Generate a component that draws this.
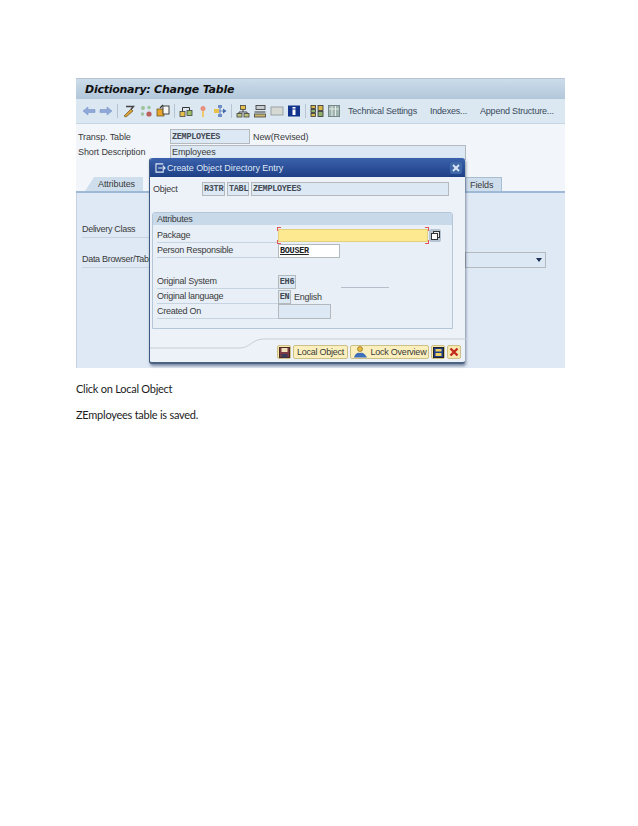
<div class="page">
  <div class="sap">
    <div class="titlebar"><h1>Dictionary: Change Table</h1></div>

    <div class="toolbar">
      <div class="icons">
        <svg width="14" height="14" viewBox="0 0 14 14"><path d="M1 7l5-4v2.500h7v3H6V11z" fill="#8fa8d8" stroke="#6f8cc4" stroke-width=".5"/></svg>
        <svg width="14" height="14" viewBox="0 0 14 14"><path d="M13 7L8 3v2.500H1v3h7V11z" fill="#8fa8d8" stroke="#6f8cc4" stroke-width=".5"/></svg>
        <span class="sep"></span>
        <svg width="14" height="14" viewBox="0 0 14 14"><path d="M2 12l7-7 2 2-7 6z" fill="#d9a23a" stroke="#6d5520" stroke-width=".7"/><path d="M4 2.500h7.500L9 5.500" fill="none" stroke="#444" stroke-width="1.400"/></svg>
        <svg width="14" height="14" viewBox="0 0 14 14"><circle cx="4" cy="4" r="2" fill="#9cc39a"/><circle cx="10" cy="3.500" r="1.700" fill="#9cc39a"/><circle cx="3.500" cy="10" r="1.700" fill="#9cc39a"/><circle cx="10" cy="10" r="2.600" fill="#b8605c"/></svg>
        <svg width="14" height="14" viewBox="0 0 14 14"><rect x="1" y="5" width="7" height="7" fill="#e8a52c" stroke="#5a4a20" stroke-width=".7"/><rect x="7" y="2" width="6" height="8" fill="#f6f6f2" stroke="#333" stroke-width=".9"/><path d="M4 4l3-3" stroke="#333" stroke-width="1.200"/></svg>
        <span class="sep"></span>
        <svg width="14" height="14" viewBox="0 0 14 14"><path d="M3.500 8V3.500h7V7" fill="none" stroke="#333"/><rect x="1" y="7.500" width="5" height="5" fill="#e6c04a" stroke="#444" stroke-width=".8"/><rect x="8" y="6.500" width="5" height="5" fill="#9dbf6a" stroke="#444" stroke-width=".8"/></svg>
        <svg width="14" height="14" viewBox="0 0 14 14"><circle cx="7" cy="4.500" r="2.500" fill="#e88f80"/><rect x="6" y="7" width="2" height="6" fill="#eec96c"/></svg>
        <svg width="14" height="14" viewBox="0 0 14 14"><path d="M1 7h10M7 2v10" stroke="#6f8cc4" stroke-width="1.200"/><rect x="5" y="1" width="4" height="3" fill="#6f8cc4"/><rect x="5" y="10" width="4" height="3" fill="#6f8cc4"/><rect x="1" y="5" width="5" height="4" fill="#e8c04c"/><path d="M10 4.500L13.500 7 10 9.500z" fill="#4468a8"/></svg>
        <span class="sep"></span>
        <svg width="14" height="14" viewBox="0 0 14 14"><path d="M7 5v3M3 10V8h8v2" fill="none" stroke="#444"/><rect x="4.500" y="1.500" width="5" height="4" fill="#e6c04a" stroke="#444" stroke-width=".8"/><rect x="1" y="9.500" width="5" height="3.500" fill="#b9c07a" stroke="#444" stroke-width=".8"/><rect x="8" y="9.500" width="5" height="3.500" fill="#b9c07a" stroke="#444" stroke-width=".8"/></svg>
        <svg width="14" height="14" viewBox="0 0 14 14"><rect x="3" y="1.500" width="9" height="4" fill="#c6cdd2" stroke="#444" stroke-width=".9"/><rect x="1.500" y="7" width="11" height="2" fill="#8a9298"/><rect x="1.500" y="10" width="11" height="3" fill="#c9b66c" stroke="#444" stroke-width=".8"/></svg>
        <svg width="14" height="14" viewBox="0 0 14 14"><rect x="1" y="3" width="12" height="8" fill="#d6d8d4" stroke="#9aa2a6"/></svg>
        <svg width="14" height="14" viewBox="0 0 14 14"><rect x="1" y="1.500" width="12" height="11" fill="#12338c"/><rect x="5.500" y="3" width="3" height="1.600" fill="#fff"/><rect x="5.500" y="5.500" width="3" height="5.500" fill="#fff"/></svg>
        <span class="sep"></span>
        <svg width="14" height="14" viewBox="0 0 14 14"><rect x="1" y="1.500" width="4.500" height="3" fill="#d8b84a" stroke="#333" stroke-width=".8"/><rect x="1" y="5.500" width="4.500" height="3" fill="#8fb06a" stroke="#333" stroke-width=".8"/><rect x="1" y="9.500" width="4.500" height="3" fill="#d8b84a" stroke="#333" stroke-width=".8"/><rect x="8" y="1.500" width="5" height="5" fill="#d8b84a" stroke="#333" stroke-width=".8"/><rect x="8" y="7.500" width="5" height="5" fill="#8fb06a" stroke="#333" stroke-width=".8"/></svg>
        <svg width="14" height="14" viewBox="0 0 14 14"><rect x="1.500" y="1.500" width="11" height="11" fill="#9fb4ae" stroke="#76878a"/><path d="M5 2v10M8.500 2v10M2 5h10" stroke="#e4ebe8"/></svg>
      </div>
      <span class="tool first">Technical Settings</span>
      <span class="tool">Indexes...</span>
      <span class="tool">Append Structure...</span>
    </div>

    <div class="head">
      <div class="row">
        <span class="lbl">Transp. Table</span>
        <span class="field mono tname">ZEMPLOYEES</span>
        <span class="status">New(Revised)</span>
      </div>
      <div class="row">
        <span class="lbl">Short Description</span>
        <span class="field sdesc">Employees</span>
      </div>
    </div>

    <div class="tabs">
      <span class="tab active">Attributes</span>
      <span class="tab fields">Fields</span>
    </div>

    <div class="panel">
      <div class="prow one"><span>Delivery Class</span></div>
      <div class="prow two">
        <span>Data Browser/Table View Maint.</span>
        <span class="select"><i></i></span>
      </div>
    </div>
  </div>

  <p class="first-line">Click on Local Object</p>
  <p>ZEmployees table is saved.</p>

  <div class="dialog">
    <div class="dlg-title">
      <svg width="11" height="10" viewBox="0 0 12 11"><path d="M9 1H1v9h8V8M3.500 5.500H11M8.500 3L11 5.500 8.500 8" fill="none" stroke="#dfe8f6" stroke-width="1.200"/></svg>
      <span>Create Object Directory Entry</span>
      <span class="close">
        <svg width="8" height="8" viewBox="0 0 8 8"><path d="M1 1l6 6M7 1L1 7" stroke="#dfe8f6" stroke-width="1.800"/></svg>
      </span>
    </div>

    <div class="dlg-body">
      <div class="obj">
        <span class="obj-lbl">Object</span>
        <span class="field mono r3">R3TR</span>
        <span class="field mono tabl">TABL</span>
        <span class="field mono oname">ZEMPLOYEES</span>
      </div>

      <div class="group">
        <div class="group-head">Attributes</div>
        <div class="grow pkg">
          <span class="glbl">Package</span>
          <span class="req"></span>
          <span class="f4">
            <svg width="9" height="9" viewBox="0 0 9 9"><rect x="2.500" y=".5" width="6" height="6" fill="#eee" stroke="#333"/><rect x=".5" y="2.500" width="6" height="6" fill="#fff" stroke="#333"/></svg>
          </span>
        </div>
        <div class="grow">
          <span class="glbl">Person Responsible</span>
          <span class="white mono">BOUSER</span>
        </div>
        <div class="grow sys">
          <span class="glbl">Original System</span>
          <span class="small mono">EH6</span>
          <span class="dash"></span>
        </div>
        <div class="grow">
          <span class="glbl">Original language</span>
          <span class="small mono en">EN</span>
          <span class="eng">English</span>
        </div>
        <div class="grow">
          <span class="glbl">Created On</span>
          <span class="empty"></span>
        </div>
      </div>
    </div>

    <div class="dlg-foot">
      <svg class="curve" width="316" height="12" viewBox="0 0 316 12"><path d="M0 10H90C100 10 102 1 114 1H316" fill="none" stroke="#c4ced9"/></svg>
      <span class="ibtn">
        <svg width="11" height="11" viewBox="0 0 11 11"><rect x=".5" y=".5" width="10" height="10" fill="#7b3a44" stroke="#4a2a20"/><rect x="2.500" y="1" width="6" height="4" fill="#efe0b8"/><rect x="2.500" y="7" width="6" height="3.500" fill="#3a3a5a"/></svg>
      </span>
      <span class="btn">Local Object</span>
      <span class="btn lock">
        <svg width="15" height="12" viewBox="0 0 15 12"><circle cx="7" cy="3" r="2.500" fill="#e8b93a" stroke="#7a6220" stroke-width=".6"/><path d="M1 11.500C2 7 5 6 7 7c2-1 5 0 7 4.500z" fill="#3f6fb8"/></svg>
        Lock Overview
      </span>
      <span class="ibtn">
        <svg width="11" height="11" viewBox="0 0 11 11"><rect x=".5" y=".5" width="10" height="10" fill="#1f3f8c" stroke="#222"/><rect x="2.500" y="2" width="6" height="2.500" fill="#f0d060"/><rect x="2.500" y="6" width="6" height="3" fill="#f0d060"/></svg>
      </span>
      <span class="ibtn">
        <svg width="10" height="10" viewBox="0 0 10 10"><path d="M1.500 1.500l7 7M8.500 1.500l-7 7" stroke="#c42a1c" stroke-width="2.400"/></svg>
      </span>
    </div>
  </div>
</div>

<style>
  :global(body) {
    background: #fff;
    margin: 0;
  }

  .page {
    position: relative;
    width: 638px;
    height: 826px;
    box-sizing: border-box;
    padding: 78px 73px 0 76px;
    overflow: hidden;
    font-family: Lato, "Open Sans", sans-serif;
    font-size: 11px;
    letter-spacing: -0.25px;
    color: #1c1c1c;
  }

  .page p {
    margin: 0 0 12px;
    line-height: 14px;
  }

  .first-line {
    padding-top: 14px;
  }

  .sap {
    height: 290px;
    display: flex;
    flex-direction: column;
    background: #f2f6fa;
    font-family: "Liberation Sans", Arial, sans-serif;
    font-size: 9px;
    color: #3a3a3a;
    letter-spacing: -0.1px;
    white-space: nowrap;
  }

  .titlebar {
    height: 21px;
    display: flex;
    align-items: center;
    padding-left: 9px;
    background: linear-gradient(#ccdcea, #b2c7da);
    border-top: 1px solid #b7c4d6;
    box-sizing: border-box;
  }

  h1 {
    margin: 0;
    font-family: "DejaVu Sans", sans-serif;
    font-size: 11px;
    font-style: italic;
    font-weight: 700;
    letter-spacing: -0.25px;
    color: #111;
  }

  .toolbar {
    height: 25px;
    display: flex;
    align-items: center;
    padding-left: 6px;
    background: #dbe7f1;
    border-bottom: 1px solid #c7d6e4;
    box-sizing: border-box;
  }

  .icons {
    display: flex;
    align-items: center;
    gap: 3px;
  }

  .sep {
    width: 1px;
    height: 14px;
    background: #b5c3d2;
    margin: 0 1px;
  }

  .tool {
    margin-left: 13px;
    color: #3a4a5c;
    letter-spacing: -0.2px;
  }

  .tool.first {
    margin-left: 7px;
  }

  .head {
    padding-top: 5px;
    display: flex;
    flex-direction: column;
  }

  .row {
    height: 15.500px;
    display: flex;
    align-items: center;
    padding-left: 2px;
  }

  .lbl {
    width: 92px;
  }

  .field {
    height: 15px;
    box-sizing: border-box;
    display: flex;
    align-items: center;
    background: #dce8f3;
    border: 1px solid #b3b9bd;
    padding-left: 1px;
  }

  .mono {
    font-family: "Liberation Mono", monospace;
    font-weight: 700;
    font-size: 8.500px;
    letter-spacing: -0.3px;
    color: #444a54;
  }

  .tname {
    width: 80px;
  }

  .status {
    margin-left: 3px;
  }

  .sdesc {
    width: 296px;
  }

  .tabs {
    margin-top: 17px;
    height: 14px;
    display: flex;
    position: relative;
    border-bottom: 2px solid #9db9d6;
  }

  .tab {
    height: 14px;
    box-sizing: border-box;
    display: flex;
    align-items: center;
    background: #cfdeec;
  }

  .tab.active {
    margin-left: 9px;
    width: 58px;
    padding-left: 13px;
    clip-path: polygon(9px 0, 100% 0, 100% 100%, 0 100%);
  }

  .tab.fields {
    margin-left: 322px;
    width: 37px;
    padding-left: 4px;
    border: 1px solid #a9bdd1;
    border-bottom: 0;
  }

  .panel {
    flex: 1;
    background: #dfe9f5;
    padding: 28px 2px 0 5px;
    border-left: 1px solid #c5d2df;
    box-sizing: border-box;
    letter-spacing: -0.3px;
  }

  .prow {
    height: 16px;
    display: flex;
    align-items: center;
    border-bottom: 1px solid #c6d3e0;
    width: 67px;
    position: relative;
  }

  .prow.two {
    margin-top: 13px;
  }

  .select {
    position: absolute;
    left: 383px;
    width: 79px;
    top: 1px;
    height: 14px;
    background: #dce8f3;
    border: 1px solid #b3b9bd;
  }

  .select i {
    position: absolute;
    right: 3px;
    top: 5px;
    width: 0;
    height: 0;
    border: 3.500px solid transparent;
    border-top: 4px solid #1d2f52;
    border-bottom: 0;
  }

  .dialog {
    position: absolute;
    left: 149px;
    top: 158px;
    width: 316px;
    height: 206px;
    display: flex;
    flex-direction: column;
    background: #edf2f8;
    font-family: "Liberation Sans", Arial, sans-serif;
    font-size: 9px;
    color: #3a3a3a;
    letter-spacing: -0.25px;
    white-space: nowrap;
    border-left: 1px solid #3c5a82;
    border-bottom: 2px solid #4c6484;
    border-radius: 3px;
    box-shadow: 1px 2px 3px rgba(40, 60, 90, 0.55);
    box-sizing: border-box;
  }

  .dlg-title {
    height: 19px;
    flex: none;
    display: flex;
    align-items: center;
    gap: 1px;
    padding-left: 5px;
    background: linear-gradient(#3a62ac, #1e3f86);
    border-radius: 3px 3px 0 0;
    color: #dfe8f6;
    letter-spacing: -0.05px;
  }

  .close {
    margin-left: auto;
    margin-right: 3px;
    width: 12px;
    height: 12px;
    display: flex;
    align-items: center;
    justify-content: center;
    background: #3f68a8;
    border-radius: 2px;
  }

  .dlg-body {
    padding: 5px 12px 0 2px;
  }

  .obj {
    display: flex;
    align-items: center;
    gap: 2px;
  }

  .obj-lbl {
    width: 47px;
    padding-left: 1px;
  }

  .obj .field {
    height: 14px;
  }

  .r3 {
    width: 23px;
  }

  .tabl {
    width: 22px;
  }

  .oname {
    width: 198px;
  }

  .group {
    margin-top: 16px;
    height: 117px;
    border: 1px solid #b5c6d9;
    border-radius: 3px 3px 0 0;
    box-sizing: border-box;
    background: #e8eff7;
  }

  .group-head {
    height: 12px;
    display: flex;
    align-items: center;
    padding-left: 4px;
    background: #c8d9ea;
    margin-bottom: 3px;
  }

  .grow {
    height: 15px;
    display: flex;
    align-items: center;
    position: relative;
  }

  .glbl {
    width: 121px;
    height: 15px;
    box-sizing: border-box;
    flex: none;
    display: flex;
    align-items: center;
    margin-left: 4px;
    border-bottom: 1px solid #c6d3e0;
  }

  .req {
    width: 150px;
    height: 13px;
    background: #fde98f;
    border: 1px solid #e3cf7c;
    box-sizing: border-box;
    position: relative;
  }

  /* red corner marks round the required field */
  .req::before {
    content: "";
    position: absolute;
    left: -2px;
    top: -3px;
    width: 152px;
    height: 17px;
    background:
      linear-gradient(#e2545a, #e2545a) 0 0 / 4px 1px no-repeat,
      linear-gradient(#e2545a, #e2545a) 0 0 / 1px 4px no-repeat,
      linear-gradient(#e2545a, #e2545a) 100% 0 / 4px 1px no-repeat,
      linear-gradient(#e2545a, #e2545a) 100% 0 / 1px 4px no-repeat,
      linear-gradient(#e2545a, #e2545a) 0 100% / 4px 1px no-repeat,
      linear-gradient(#e2545a, #e2545a) 0 100% / 1px 4px no-repeat,
      linear-gradient(#e2545a, #e2545a) 100% 100% / 4px 1px no-repeat,
      linear-gradient(#e2545a, #e2545a) 100% 100% / 1px 4px no-repeat;
  }

  .f4 {
    margin-left: 1px;
    width: 12px;
    height: 13px;
    display: flex;
    align-items: center;
    justify-content: center;
    background: #b6c3d1;
    border-radius: 2px;
  }

  .white {
    width: 62px;
    height: 14px;
    box-sizing: border-box;
    display: flex;
    align-items: center;
    padding-left: 1px;
    background: #fff;
    border: 1px solid #b3b9bd;
    color: #222;
    text-decoration: underline;
  }

  .sys {
    margin-top: 16px;
  }

  .small {
    height: 14px;
    box-sizing: border-box;
    display: flex;
    align-items: center;
    justify-content: center;
    width: 18px;
    background: #dce8f3;
    border: 1px solid #b3b9bd;
  }

  .small.en {
    width: 13px;
  }

  .dash {
    width: 48px;
    height: 1px;
    background: #b5c0cc;
    margin-left: 45px;
    margin-top: 11px;
  }

  .eng {
    margin-left: 3px;
  }

  .empty {
    width: 53px;
    height: 15px;
    box-sizing: border-box;
    background: #dce8f3;
    border: 1px solid #b3b9bd;
  }

  .dlg-foot {
    position: relative;
    flex: 1;
    display: flex;
    align-items: flex-end;
    justify-content: flex-end;
    gap: 2px;
    padding: 0 4px 3px 0;
  }

  .curve {
    position: absolute;
    left: 0;
    top: 9px;
  }

  .ibtn {
    width: 14px;
    height: 14px;
    box-sizing: border-box;
    display: flex;
    align-items: center;
    justify-content: center;
    background: #f7e9b0;
    border: 1px solid #cdbf86;
    border-radius: 2px;
    position: relative;
  }

  .btn {
    height: 14px;
    box-sizing: border-box;
    display: flex;
    align-items: center;
    justify-content: center;
    gap: 3px;
    width: 55px;
    background: #fbf0bd;
    border: 1px solid #cdbf86;
    border-radius: 2px;
    position: relative;
  }

  .btn.lock {
    width: 79px;
  }
</style>
